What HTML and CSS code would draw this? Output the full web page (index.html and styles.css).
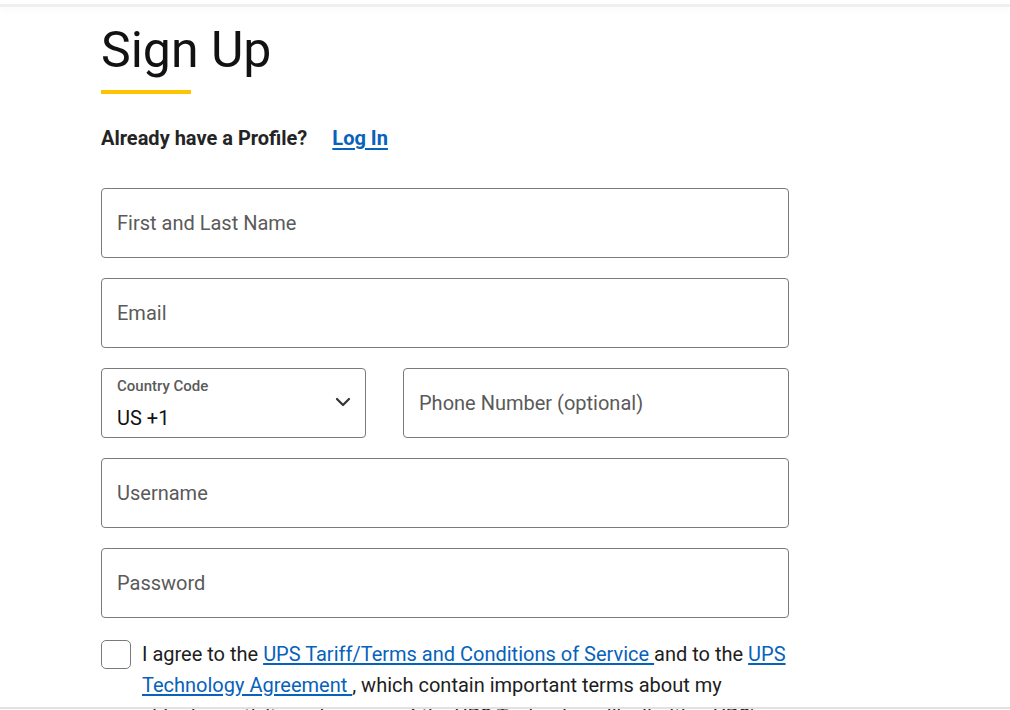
FILE: index.html
```html
<!DOCTYPE html>
<html lang="en">
<head>
<meta charset="utf-8">
<title>Sign Up</title>
<link rel="stylesheet" href="styles.css">
</head>
<body>
<div class="page">
  <div class="topbar"></div>
  <main class="content">
    <h1 class="title">Sign Up</h1>
    <div class="accent"></div>
    <p class="login-row"><span class="login-q">Already have a Profile?</span><a class="login-link" href="#">Log In</a></p>
    <form class="form">
      <div class="field"><span class="placeholder">First and Last Name</span></div>
      <div class="field"><span class="placeholder">Email</span></div>
      <div class="row">
        <div class="field select">
          <div class="select-text">
            <span class="select-label">Country Code</span>
            <span class="select-value">US +1</span>
          </div>
          <svg class="chevron" width="16" height="10" viewBox="0 0 16 10"><path d="M2 2 L8 8 L14 2" fill="none" stroke="#333" stroke-width="2.2" stroke-linecap="round" stroke-linejoin="round"/></svg>
        </div>
        <div class="field phone"><span class="placeholder">Phone Number (optional)</span></div>
      </div>
      <div class="field"><span class="placeholder">Username</span></div>
      <div class="field"><span class="placeholder">Password</span></div>
      <div class="agree">
        <span class="checkbox"></span>
        <p class="agree-text">I agree to the <a href="#">UPS Tariff/Terms and Conditions of Service&nbsp;</a>and to the <a href="#">UPS Technology Agreement&nbsp;</a>, which contain important terms about my shipping activity and my use of the UPS Technology, like limiting UPS's liability.</p>
      </div>
    </form>
  </main>
  <div class="bottom-edge"></div>
</div>
</body>
</html>
```
FILE: styles.css
```css
html, body {
  margin: 0;
  padding: 0;
  background: #fff;
}
body {
  font-family: Roboto, "Liberation Sans", Arial, sans-serif;
  color: #1d1d1d;
}
.page {
  height: 710px;
  overflow: hidden;
}
.topbar {
  margin-top: 4px;
  height: 3px;
  background: #efefef;
  box-shadow: 0 3px 6px rgba(0, 0, 0, 0.04);
}
.bottom-edge {
  position: fixed;
  left: 0;
  right: 0;
  top: 707px;
  height: 2px;
  background: #e2e2e2;
}
.content {
  padding-left: 101px;
  width: 688px;
}
.title {
  margin: 13px 0 0;
  font-size: 50px;
  line-height: 60px;
  font-weight: 400;
  color: #121212;
}
.accent {
  margin-top: 10px;
  width: 90px;
  height: 4px;
  background: #ffc400;
}
.login-row {
  margin: 32px 0 0;
  font-size: 20px;
  line-height: 24px;
  font-weight: 700;
  display: flex;
  gap: 25px;
}
.login-q {
  color: #242424;
}
.login-link {
  color: #0662bb;
  text-decoration: underline;
  text-underline-offset: 3px;
}
.form {
  margin-top: 38px;
  display: flex;
  flex-direction: column;
  gap: 20px;
}
.field {
  box-sizing: border-box;
  height: 70px;
  border: 1px solid #7a7a7a;
  border-radius: 4px;
  display: flex;
  align-items: center;
  padding: 0 15px;
}
.placeholder {
  font-size: 20px;
  color: #5a5a5a;
}
.row {
  display: flex;
  gap: 37px;
}
.select {
  width: 265px;
  justify-content: space-between;
  padding-right: 14px;
}
.phone {
  flex: 1;
}
.select-text {
  display: flex;
  flex-direction: column;
  gap: 8px;
  margin-top: 1px;
}
.select-label {
  font-size: 15px;
  line-height: 20px;
  font-weight: 500;
  color: #5a5a5a;
}
.select-value {
  font-size: 20px;
  line-height: 28px;
  color: #121212;
}
.chevron {
  margin-top: -2px;
}
.agree {
  margin-top: 1px;
  display: flex;
  align-items: flex-start;
  gap: 11px;
}
.checkbox {
  flex: none;
  box-sizing: border-box;
  width: 30px;
  height: 29px;
  margin-top: 1px;
  border: 1px solid #7a7a7a;
  border-radius: 5px;
}
.agree-text {
  margin: 0;
  font-size: 20px;
  line-height: 31px;
  color: #1d1d1d;
}
.agree-text a {
  color: #0662bb;
  text-decoration: underline;
  text-underline-offset: 2px;
}
```
